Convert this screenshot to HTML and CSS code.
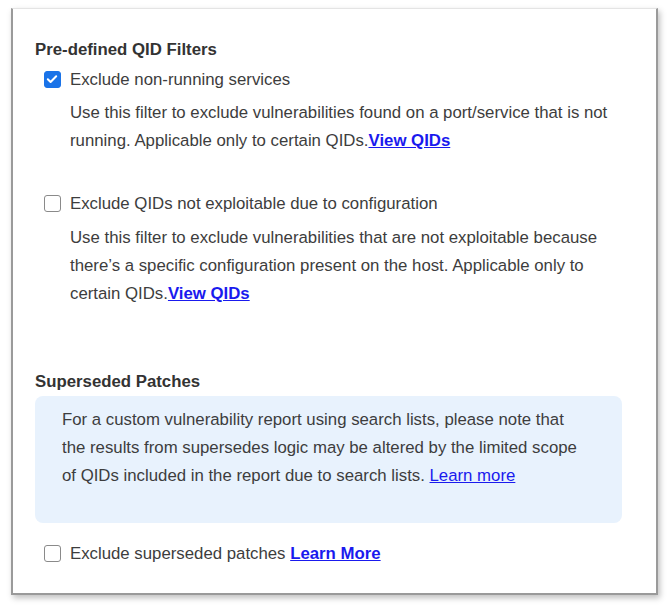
FILE: index.html
```html
<!DOCTYPE html>
<html lang="en">
<head>
  <meta charset="UTF-8" />
  <meta name="viewport" content="width=device-width, initial-scale=1.0"/>
  <title>Report Filters</title>
  <link rel="stylesheet" href="styles.css">
</head>
<body>
  <div class="card">
    <h2 class="section-title">Pre-defined QID Filters</h2>

    <label class="option">
      <span class="check checked">
        <svg viewBox="0 0 16 16" width="16" height="16"><path d="M3.8 8.2l2.8 2.8 5.6-5.8" fill="none" stroke="#fff" stroke-width="2" stroke-linecap="round" stroke-linejoin="round"/></svg>
      </span>
      <span>Exclude non-running services</span>
    </label>
    <p class="desc">Use this filter to exclude vulnerabilities found on a port/service that is not running. Applicable only to certain QIDs.<a href="#" class="link-bold">View QIDs</a></p>

    <label class="option option-gap">
      <span class="check"></span>
      <span>Exclude QIDs not exploitable due to configuration</span>
    </label>
    <p class="desc desc-second">Use this filter to exclude vulnerabilities that are not exploitable because there’s a specific configuration present on the host. Applicable only to certain QIDs.<a href="#" class="link-bold">View QIDs</a></p>

    <h2 class="section-title section-gap">Superseded Patches</h2>
    <div class="info-box">
      For a custom vulnerability report using search lists, please note that the results from supersedes logic may be altered by the limited scope of QIDs included in the report due to search lists. <a href="#">Learn more</a>
    </div>

    <label class="option option-last">
      <span class="check"></span>
      <span>Exclude superseded patches <a href="#" class="link-bold">Learn More</a></span>
    </label>
  </div>
</body>
</html>
```

FILE: styles.css
```css
* {
  box-sizing: border-box;
  margin: 0;
  padding: 0;
}

body {
  font-family: 'Liberation Sans', Arial, sans-serif;
  background: #fff;
  color: #3d3d3d;
  font-size: 16.8px;
}

.card {
  margin: 8px 13px 15px 11px;
  height: 587px;
  background: #fff;
  border: 1px solid #e4e4e4;
  border-left: 2px solid #9a9a9a;
  border-right: 2px solid #9a9a9a;
  border-bottom: 2px solid #9a9a9a;
  box-shadow: 2px 3px 6px rgba(0,0,0,0.25);
  padding: 31px 34px 0 22px;
}

.section-title {
  font-size: 16.8px;
  font-weight: bold;
  color: #333;
  line-height: 20px;
}

.section-gap {
  margin-top: 64px;
}

.option {
  display: flex;
  align-items: center;
  gap: 9px;
  margin-left: 9px;
  margin-top: 10px;
  line-height: 20px;
}

.option-gap {
  margin-top: 39px;
}

.option-last {
  margin-top: 21px;
}

.check {
  width: 17px;
  height: 17px;
  border: 1.5px solid #8a8a8a;
  border-radius: 3px;
  flex-shrink: 0;
  background: #fff;
  display: flex;
  margin-top: -1px;
}

.check.checked {
  background: #1a73e8;
  border-color: #1a73e8;
}

.check svg {
  margin: -1px;
}

.desc {
  margin-left: 35px;
  margin-top: 9px;
  line-height: 28px;
}

.desc-second {
  margin-top: 10px;
}

a {
  color: #1a1aee;
}

.link-bold {
  font-weight: bold;
}

.info-box {
  margin-top: 4px;
  background: #e8f2fd;
  border-radius: 8px;
  padding: 10px 36px 33px 27px;
  line-height: 28px;
}
```
